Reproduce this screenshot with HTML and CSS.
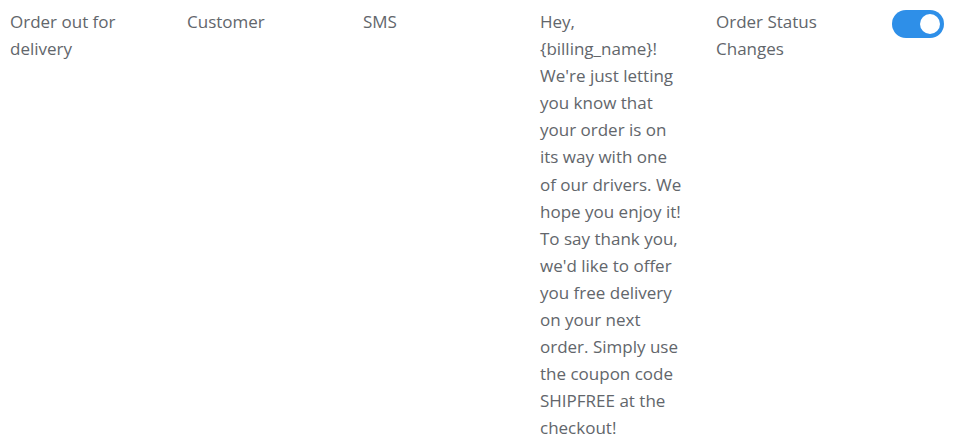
FILE: index.html
```html
<!DOCTYPE html>
<html>
<head>
<meta charset="utf-8">
<link rel="stylesheet" href="styles.css">
</head>
<body>
<div class="row">
  <div class="cell">Order out for delivery</div>
  <div class="cell">Customer</div>
  <div class="cell">SMS</div>
  <div class="cell msg">Hey, {billing_name}! We're just letting you know that your order is on its way with one of&nbsp;our drivers. We hope you enjoy it! To say thank you, we'd like to offer you free delivery on your next order. Simply use the coupon code SHIPFREE at the checkout!</div>
  <div class="cell">Order Status Changes</div>
  <div class="cell toggle-cell"><span class="toggle"><span class="knob"></span></span></div>
</div>
</body>
</html>
```
FILE: styles.css
```css
html, body {
  margin: 0;
  padding: 0;
  background: #ffffff;
}
body {
  font-family: "Open Sans", "Noto Sans", sans-serif;
  font-size: 17px;
  line-height: 27.1px;
  color: #62666b;
}
.row {
  display: grid;
  grid-template-columns: 177px 176px 177px 176px 176px 78px;
  padding-top: 8px;
}
.cell {
  padding: 0 10px;
}
.msg {
  padding-right: 18px;
}
.toggle-cell {
  padding-top: 2px;
}
.toggle {
  display: flex;
  align-items: center;
  justify-content: flex-end;
  width: 52px;
  height: 28px;
  border-radius: 14px;
  background: #2e8fe8;
  padding: 0 4px;
  box-sizing: border-box;
}
.knob {
  width: 20px;
  height: 20px;
  border-radius: 50%;
  background: #ffffff;
}
```
